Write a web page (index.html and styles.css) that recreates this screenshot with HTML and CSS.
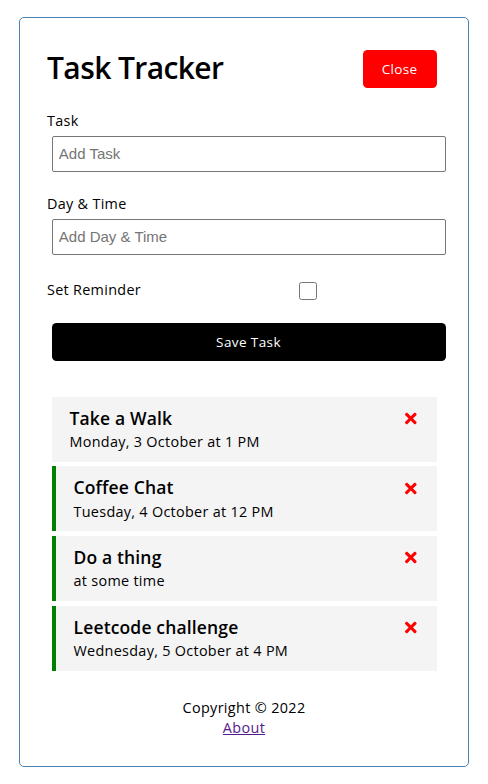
FILE: index.html
```html
<!DOCTYPE html>
<html lang="en">
<head>
<meta charset="utf-8">
<title>Task Tracker</title>
<link rel="stylesheet" href="styles.css">
</head>
<body>
<div class="container">
  <header class="header">
    <h1 class="title">Task Tracker</h1>
    <button class="btn btn-close">Close</button>
  </header>
  <form class="add-form">
    <div class="form-control">
      <label class="label">Task</label>
      <input class="text-input" type="text" placeholder="Add Task">
    </div>
    <div class="form-control">
      <label class="label">Day &amp; Time</label>
      <input class="text-input" type="text" placeholder="Add Day &amp; Time">
    </div>
    <div class="form-control-check">
      <label class="label check-label">Set Reminder</label>
      <span class="check-cell"><input class="check" type="checkbox"></span>
    </div>
    <button class="btn btn-block" type="button">Save Task</button>
  </form>
  <div class="tasks">
    <div class="task">
      <h3 class="task-title">Take a Walk
        <svg class="del" viewBox="0 0 352 512"><path d="M242.72 256l100.07-100.07c12.28-12.28 12.28-32.19 0-44.48l-22.240-22.24c-12.28-12.28-32.19-12.28-44.48 0L176 189.28 75.93 89.21c-12.28-12.28-32.19-12.28-44.48 0L9.21 111.45c-12.28 12.28-12.28 32.19 0 44.48L109.28 256 9.21 356.07c-12.28 12.28-12.28 32.19 0 44.48l22.24 22.24c12.28 12.28 32.2 12.28 44.48 0L176 322.72l100.07 100.07c12.28 12.28 32.2 12.28 44.48 0l22.24-22.24c12.28-12.28 12.28-32.19 0-44.48L242.72 256z"/></svg>
      </h3>
      <p class="task-day">Monday, 3 October at 1 PM</p>
    </div>
    <div class="task reminder">
      <h3 class="task-title">Coffee Chat
        <svg class="del" viewBox="0 0 352 512"><path d="M242.72 256l100.07-100.07c12.28-12.28 12.28-32.19 0-44.48l-22.24-22.24c-12.28-12.28-32.19-12.28-44.48 0L176 189.28 75.93 89.21c-12.28-12.28-32.19-12.28-44.48 0L9.21 111.45c-12.28 12.28-12.28 32.19 0 44.48L109.28 256 9.21 356.07c-12.28 12.28-12.28 32.19 0 44.48l22.24 22.24c12.28 12.28 32.2 12.28 44.48 0L176 322.72l100.07 100.07c12.28 12.28 32.2 12.28 44.48 0l22.24-22.24c12.28-12.28 12.28-32.19 0-44.48L242.72 256z"/></svg>
      </h3>
      <p class="task-day">Tuesday, 4 October at 12 PM</p>
    </div>
    <div class="task reminder">
      <h3 class="task-title">Do a thing
        <svg class="del" viewBox="0 0 352 512"><path d="M242.72 256l100.07-100.07c12.28-12.28 12.28-32.19 0-44.48l-22.24-22.24c-12.28-12.28-32.19-12.28-44.48 0L176 189.28 75.93 89.21c-12.28-12.28-32.19-12.28-44.48 0L9.21 111.45c-12.28 12.28-12.28 32.19 0 44.48L109.28 256 9.21 356.07c-12.28 12.28-12.28 32.19 0 44.48l22.24 22.24c12.28 12.28 32.2 12.28 44.48 0L176 322.72l100.07 100.07c12.28 12.28 32.2 12.28 44.48 0l22.24-22.24c12.28-12.28 12.28-32.19 0-44.48L242.72 256z"/></svg>
      </h3>
      <p class="task-day">at some time</p>
    </div>
    <div class="task reminder">
      <h3 class="task-title">Leetcode challenge
        <svg class="del" viewBox="0 0 352 512"><path d="M242.72 256l100.07-100.07c12.28-12.28 12.28-32.19 0-44.48l-22.24-22.24c-12.28-12.28-32.19-12.28-44.48 0L176 189.28 75.93 89.21c-12.28-12.28-32.19-12.28-44.48 0L9.21 111.45c-12.28 12.28-12.28 32.19 0 44.48L109.28 256 9.21 356.07c-12.28 12.28-12.28 32.19 0 44.48l22.24 22.24c12.28 12.28 32.2 12.28 44.48 0L176 322.72l100.07 100.07c12.28 12.28 32.2 12.28 44.48 0l22.24-22.24c12.28-12.28 12.28-32.19 0-44.48L242.72 256z"/></svg>
      </h3>
      <p class="task-day">Wednesday, 5 October at 4 PM</p>
    </div>
  </div>
  <footer class="footer">
    <p class="copy">Copyright &copy; 2022</p>
    <a class="about" href="#about">About</a>
  </footer>
</div>
</body>
</html>
```
FILE: styles.css
```css
* {
  box-sizing: border-box;
  margin: 0;
  padding: 0;
}

body {
  font-family: "Open Sans", "Liberation Sans", sans-serif;
  color: #000;
  background: #fff;
}

.container {
  margin: 17px 19px;
  padding: 27px;
  border: 1px solid #4682b4;
  border-radius: 5px;
}

.header {
  display: flex;
  justify-content: space-between;
  align-items: center;
  height: 48px;
  margin-bottom: 17.5px;
}

.title {
  font-size: 30px;
  font-weight: 600;
  letter-spacing: -0.6px;
  line-height: 38px;
  padding-bottom: 2px;
}

.btn {
  display: block;
  border: none;
  border-radius: 4.5px;
  color: #fff;
  font-family: inherit;
  font-size: 13.5px;
  cursor: pointer;
}

.btn-close {
  width: 74px;
  height: 38px;
  margin-right: 4.5px;
  background: #ff0000;
  letter-spacing: 0.3px;
}

.add-form {
  display: flex;
  flex-direction: column;
  margin-bottom: 36px;
}

.form-control {
  display: flex;
  flex-direction: column;
  margin-bottom: 17.5px;
}

.label {
  display: block;
  font-size: 14.4px;
  line-height: 19.6px;
  padding-bottom: 2px;
  letter-spacing: 0.3px;
}

.text-input {
  display: block;
  align-self: flex-start;
  width: 394px;
  height: 35.5px;
  margin: 4px 0 4.5px 4.5px;
  padding: 3px 6.3px;
  border: 1px solid #767676;
  border-radius: 2px;
  font-family: "Liberation Sans", Arial, sans-serif;
  font-size: 15px;
  color: #000;
}

.text-input::placeholder {
  color: #757575;
}

.form-control-check {
  display: flex;
  align-items: center;
  height: 27.3px;
  margin-top: 0.5px;
  margin-bottom: 18.5px;
}

.check-label {
  width: 128px;
}

.check-cell {
  flex: 1;
  display: flex;
  justify-content: center;
}

.check {
  appearance: none;
  -webkit-appearance: none;
  width: 17.5px;
  height: 18.5px;
  border: 1px solid #767676;
  border-radius: 2.5px;
  background: #fff;
}

.btn-block {
  width: 394px;
  height: 37.7px;
  margin-left: 4.5px;
  background: #000;
  letter-spacing: 0.4px;
}

.tasks {
  display: flex;
  flex-direction: column;
  gap: 4.7px;
}

.task {
  margin: 0 4.5px;
  padding: 9px 18px;
  height: 65px;
  background: #f4f4f4;
}

.task.reminder {
  border-left: 4.5px solid #008000;
}

.task-title {
  display: flex;
  justify-content: space-between;
  align-items: center;
  font-size: 17.5px;
  font-weight: 600;
  line-height: 25.3px;
  letter-spacing: 0.15px;
}

.del {
  width: 11.6px;
  height: 16.85px;
  margin-right: 1.5px;
  fill: #ff0000;
}

.task-day {
  font-size: 14.4px;
  line-height: 21.6px;
  letter-spacing: 0.3px;
}

.footer {
  margin-top: 27px;
  text-align: center;
  font-size: 14.4px;
  line-height: 20.7px;
  letter-spacing: 0.35px;
}

.about {
  color: #551a8b;
}
```
